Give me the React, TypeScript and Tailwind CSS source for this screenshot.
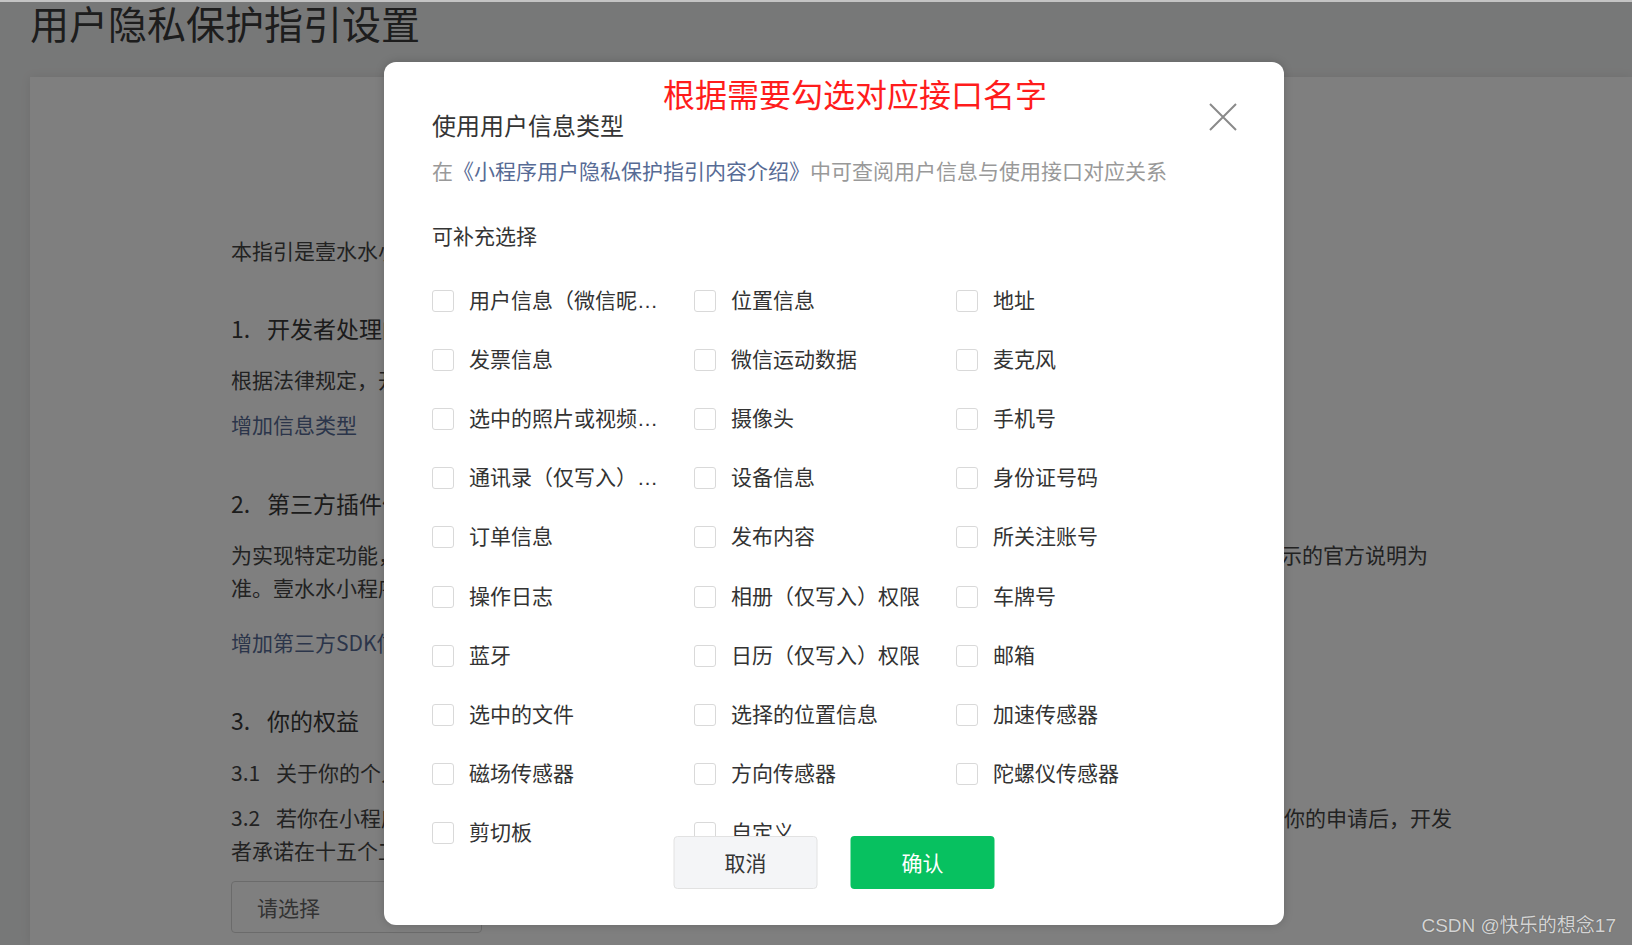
import { useState } from 'react';

const FONT = "font-['Noto_Sans_CJK_SC','Noto_Sans',sans-serif]";

const infoTypes: string[][] = [
  ['用户信息（微信昵称、头像）', '位置信息', '地址'],
  ['发票信息', '微信运动数据', '麦克风'],
  ['选中的照片或视频信息', '摄像头', '手机号'],
  ['通讯录（仅写入）权限', '设备信息', '身份证号码'],
  ['订单信息', '发布内容', '所关注账号'],
  ['操作日志', '相册（仅写入）权限', '车牌号'],
  ['蓝牙', '日历（仅写入）权限', '邮箱'],
  ['选中的文件', '选择的位置信息', '加速传感器'],
  ['磁场传感器', '方向传感器', '陀螺仪传感器'],
  ['剪切板', '自定义'],
];

function CheckItem({ label, checked, onToggle }: { label: string; checked: boolean; onToggle: () => void }) {
  return (
    <label className="flex h-[59.2px] items-center cursor-pointer" onClick={onToggle}>
      <span
        className={`w-[22px] h-[22px] shrink-0 rounded-[3px] border ${
          checked ? 'border-[#07c160] bg-[#07c160]' : 'border-[#d9d9d9] bg-white'
        }`}
      />
      {/* latin face first so the overflow ellipsis sits on the baseline */}
      <span className="ml-[15px] max-w-[190px] truncate font-['Liberation_Sans','Noto_Sans_CJK_SC',sans-serif] text-[21px] leading-[30px] text-[#333333]">
        {label}
      </span>
    </label>
  );
}

function NumberedHeading({ num, text }: { num: string; text: string }) {
  return (
    <div className="flex text-[23px] leading-[33px] text-[#383838] whitespace-nowrap">
      <span className="w-[36px]">{num}</span>
      <span>{text}</span>
    </div>
  );
}

function InfoTypeDialog() {
  const [selected, setSelected] = useState<Record<string, boolean>>({});

  const toggle = (name: string) => setSelected((s) => ({ ...s, [name]: !s[name] }));

  return (
    <div className="absolute left-[384px] top-[62px] w-[900px] h-[863px] rounded-[12px] bg-white shadow-[0_0_10px_rgba(0,0,0,0.18)] px-[48px] pt-[46px]">
      {/* annotation over the dialog header */}
      <div className="absolute left-[279px] top-[9px] text-[32px] leading-[44px] text-[#ff1c1c] whitespace-nowrap">
        根据需要勾选对应接口名字
      </div>

      <button className="absolute right-[47px] top-[41px] w-[28px] h-[28px]">
        <svg viewBox="0 0 28 28" className="w-[28px] h-[28px]">
          <path d="M1 1 L27 27 M27 1 L1 27" stroke="#8a8a8a" strokeWidth="2" fill="none" />
        </svg>
      </button>

      <h2 className="text-[24px] leading-[34px] text-[#353535]">使用用户信息类型</h2>
      <p className="mt-[13px] text-[21px] leading-[30px] text-[#999999] whitespace-nowrap">
        在<span className="text-[#576b95]">《小程序用户隐私保护指引内容介绍》</span>中可查阅用户信息与使用接口对应关系
      </p>

      <p className="mt-[35px] text-[21px] leading-[30px] text-[#353535]">可补充选择</p>

      <div className="mt-[21px] grid grid-cols-[262px_262px_262px]">
        {infoTypes.flat().map((name) => (
          <CheckItem key={name} label={name} checked={!!selected[name]} onToggle={() => toggle(name)} />
        ))}
      </div>

      {/* footer sits over the end of the list */}
      <div className="absolute left-1/2 -translate-x-1/2 bottom-[36px] flex gap-[33px]">
        <button className="w-[144px] h-[53px] rounded-[4px] border border-[#e2e2e2] bg-[#f4f5f7] text-[21px] text-[#353535]">
          取消
        </button>
        <button className="w-[144px] h-[53px] rounded-[4px] bg-[#07c160] text-[21px] text-white">确认</button>
      </div>
    </div>
  );
}

export default function App() {
  return (
    <div className={`relative w-full h-[945px] overflow-hidden bg-[#eff0f0] ${FONT}`}>
      <div className="flex flex-col h-full">
        <h1 className="pl-[30px] h-[46px] leading-[44px] text-[39px] text-[#3a3a3a]">用户隐私保护指引设置</h1>

        <div className="ml-[30px] mt-[31px] flex-1 bg-white shadow-[0_0_10px_rgba(0,0,0,0.08)] pl-[201px] pt-[157px] text-[21px] leading-[33px] text-[#454545]">
          <p className="whitespace-nowrap">本指引是壹水水小程序开发者为处理你的个人信息而制定。</p>

          <div className="mt-[45px]">
            <NumberedHeading num="1." text="开发者处理的信息" />
          </div>
          <p className="mt-[18px] whitespace-nowrap">根据法律规定，开发者仅处理实现小程序功能所必要的信息。</p>
          <p className="mt-[12px] text-[#576b95]">增加信息类型</p>

          <div className="mt-[46px]">
            <NumberedHeading num="2." text="第三方插件信息" />
          </div>
          <p className="mt-[18px] whitespace-nowrap">
            为实现特定功能，开发者可能会接入由第三方提供的插件或工具包等。第三方插件的个人信息处理规则，请以其公示的官方说明为
          </p>
          <p className="whitespace-nowrap">准。壹水水小程序接入的第三方插件信息如下。</p>
          <p className="mt-[22px] text-[#576b95]">增加第三方SDK信息</p>

          <div className="mt-[45px]">
            <NumberedHeading num="3." text="你的权益" />
          </div>
          <p className="mt-[19px] flex whitespace-nowrap">
            <span className="w-[45px]">3.1</span>
            <span>关于你的个人信息，你可以通过以下方式与开发者联系，行使查阅、复制、更正、删除等法定权利。</span>
          </p>
          <p className="mt-[12px] flex whitespace-nowrap">
            <span className="w-[45px]">3.2</span>
            <span>若你在小程序中有关于个人信息处理的任何疑问或投诉，可以通过下方联系方式与开发者联系，开发者在收到你的申请后，开发</span>
          </p>
          <p className="whitespace-nowrap">者承诺在十五个工作日内完成核查和处理。</p>

          <div className="mt-[14px] w-[251px] h-[52px] rounded-[4px] border border-[#d6d6d6] flex items-center pl-[25px] text-[#666666]">
            请选择
          </div>
        </div>
      </div>

      {/* dimmed backdrop */}
      <div className="absolute inset-0 bg-black/50" />
      <div className="absolute top-0 inset-x-0 h-[2px] bg-[#c4c4c4]" />

      <InfoTypeDialog />

      <div className="absolute right-[16px] bottom-[5px] font-['Liberation_Sans','Noto_Sans_CJK_SC',sans-serif] text-[19px] text-[#d4d4d4] [text-shadow:0_0_1px_#555]">
        CSDN @快乐的想念17
      </div>
    </div>
  );
}
